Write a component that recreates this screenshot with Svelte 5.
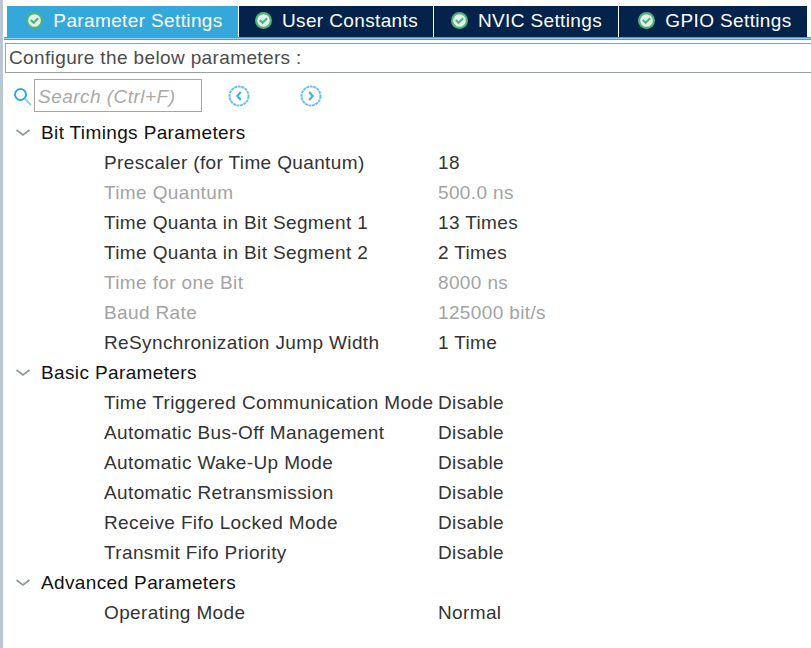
<script>
  const tabs = ['Parameter Settings', 'User Constants', 'NVIC Settings', 'GPIO Settings']

  const groups = [
    {
      title: 'Bit Timings Parameters',
      rows: [
        ['Prescaler (for Time Quantum)', '18'],
        ['Time Quantum', '500.0 ns', true],
        ['Time Quanta in Bit Segment 1', '13 Times'],
        ['Time Quanta in Bit Segment 2', '2 Times'],
        ['Time for one Bit', '8000 ns', true],
        ['Baud Rate', '125000 bit/s', true],
        ['ReSynchronization Jump Width', '1 Time']
      ]
    },
    {
      title: 'Basic Parameters',
      rows: [
        ['Time Triggered Communication Mode', 'Disable'],
        ['Automatic Bus-Off Management', 'Disable'],
        ['Automatic Wake-Up Mode', 'Disable'],
        ['Automatic Retransmission', 'Disable'],
        ['Receive Fifo Locked Mode', 'Disable'],
        ['Transmit Fifo Priority', 'Disable']
      ]
    },
    {
      title: 'Advanced Parameters',
      rows: [['Operating Mode', 'Normal']]
    }
  ]
</script>

<div class="page">
  <div class="tabs">
    {#each tabs as tab, i}
      <div class="tab" class:active={i === 0}>
        <svg class="check" width="17" height="17" viewBox="0 0 17 17">
          <circle cx="8.5" cy="8.5" r="8.5" fill="#4fb37a" />
          <circle cx="8.5" cy="8.5" r="6.3" fill="#e4f3ea" />
          <path d="M4.8 8l2.8 2.8 4.6-4.6" fill="none" stroke="#4fb37a" stroke-width="2.2" />
        </svg>
        <span>{tab}</span>
      </div>
    {/each}
  </div>
  <div class="rule"></div>

  <div class="configure">Configure the below parameters :</div>

  <div class="search">
    <svg class="lens" width="18" height="18" viewBox="0 0 18 18" fill="none">
      <circle cx="6.5" cy="6.5" r="5.5" stroke="#36a7dc" stroke-width="2" />
      <path d="M11 11l6 6" stroke="#8fd0ee" stroke-width="2" />
    </svg>
    <div class="field">Search (Ctrl+F)</div>
    <svg class="nav" width="22" height="22" viewBox="0 0 22 22" fill="none">
      <circle cx="11" cy="11" r="9.5" stroke="#6cc0e8" stroke-width="2" stroke-dasharray="3 0.6" />
      <path d="M12.8 7l-3.5 4 3.5 4" stroke="#45abdd" stroke-width="2" />
    </svg>
    <svg class="nav next" width="22" height="22" viewBox="0 0 22 22" fill="none">
      <circle cx="11" cy="11" r="9.5" stroke="#6cc0e8" stroke-width="2" stroke-dasharray="3 0.6" />
      <path d="M9.2 7l3.5 4-3.5 4" stroke="#45abdd" stroke-width="2" />
    </svg>
  </div>

  <div class="tree">
    {#each groups as group}
      <div class="group">
        <svg class="chev" width="16" height="8" viewBox="0 0 16 8" fill="none" stroke="#8f959b" stroke-width="1.6">
          <path d="M1.5 1l6.5 5 6.5-5" />
        </svg>
        <span>{group.title}</span>
      </div>
      {#each group.rows as row}
        <div class="row" class:off={row[2]}>
          <span class="name">{row[0]}</span>
          <span class="value">{row[1]}</span>
        </div>
      {/each}
    {/each}
  </div>
</div>

<style>
  :global(body) { margin: 0; background: #fff; }
  .page {
    width: 808px;
    height: 648px;
    border-left: 3px solid #b7c8d2;
    font-family: "Liberation Sans", Arial, sans-serif;
    font-size: 19px;
    overflow: hidden;
    letter-spacing: 0.37px;
  }
  .tabs { display: flex; padding: 6px 0 0 4px; height: 31px; }
  .tab {
    display: flex;
    align-items: center;
    justify-content: center;
    gap: 10px;
    background: #03234b;
    color: #fff;
    border-left: 1px solid #fff;
    padding: 0 0 2px 1px;
    box-sizing: border-box;
  }
  .tab:nth-child(1) { width: 231px; padding-left: 4px; }
  .tab:nth-child(2) { width: 195px; }
  .tab:nth-child(3) { width: 185px; }
  .tab:nth-child(4) { width: 189px; padding-left: 4px; }
  .tab.active { background: #34a8db; border-left: 0; }
  .check { flex: none; }
  .rule {
    height: 3px;
    margin-left: 1px;
    background: #8fd0ee;
    border-top: 1px solid #34a8db;
    border-bottom: 1px solid #34a8db;
    box-sizing: border-box;
  }
  .configure {
    margin: 3px 0 0 2px;
    height: 28px;
    line-height: 28px;
    padding-left: 3px;
    border: 1px solid #9aa0a6;
    border-right: 0;
    color: #4c4c4c;
  }
  .search { display: flex; align-items: center; margin-top: 6px; height: 34px; padding-left: 11px; }
  .lens { flex: none; margin-top: 2px; }
  .field {
    width: 168px;
    height: 33px;
    line-height: 33px;
    margin: 0 0 2px 2px;
    padding-left: 3px;
    box-sizing: border-box;
    border: 1px solid #a5a5a5;
    color: #a9a9a9;
    font-style: italic;
    letter-spacing: 0.47px;
  }
  .nav { margin-left: 26px; }
  .nav.next { margin-left: 50px; }
  .tree { margin-top: 5px; }
  .group, .row { height: 30px; line-height: 30px; display: flex; align-items: center; white-space: nowrap; }
  .group { color: #111; }
  .chev { margin: 0 10px 0 12px; flex: none; }
  .row { padding-left: 101px; color: #333; }
  .row.off { color: #a3a3a3; }
  .name { width: 334px; flex: none; }
</style>
